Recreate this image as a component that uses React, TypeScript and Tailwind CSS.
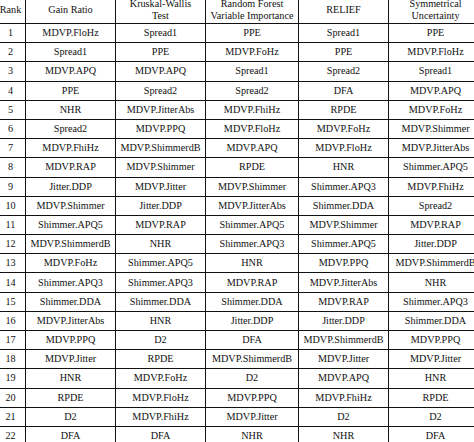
import { Fragment, ReactNode } from 'react';

const headers: string[][] = [
  ['Rank'],
  ['Gain Ratio'],
  ['Kruskal-Wallis', 'Test'],
  ['Random Forest', 'Variable Importance'],
  ['RELIEF'],
  ['Symmetrical', 'Uncertainty'],
];

const rows: string[][] = [
  ['MDVP.FloHz', 'Spread1', 'PPE', 'Spread1', 'PPE'],
  ['Spread1', 'PPE', 'MDVP.FoHz', 'PPE', 'MDVP.FloHz'],
  ['MDVP.APQ', 'MDVP.APQ', 'Spread1', 'Spread2', 'Spread1'],
  ['PPE', 'Spread2', 'Spread2', 'DFA', 'MDVP.APQ'],
  ['NHR', 'MDVP.JitterAbs', 'MDVP.FhiHz', 'RPDE', 'MDVP.FoHz'],
  ['Spread2', 'MDVP.PPQ', 'MDVP.FloHz', 'MDVP.FoHz', 'MDVP.Shimmer'],
  ['MDVP.FhiHz', 'MDVP.ShimmerdB', 'MDVP.APQ', 'MDVP.FloHz', 'MDVP.JitterAbs'],
  ['MDVP.RAP', 'MDVP.Shimmer', 'RPDE', 'HNR', 'Shimmer.APQ5'],
  ['Jitter.DDP', 'MDVP.Jitter', 'MDVP.Shimmer', 'Shimmer.APQ3', 'MDVP.FhiHz'],
  ['MDVP.Shimmer', 'Jitter.DDP', 'MDVP.JitterAbs', 'Shimmer.DDA', 'Spread2'],
  ['Shimmer.APQ5', 'MDVP.RAP', 'Shimmer.APQ5', 'MDVP.Shimmer', 'MDVP.RAP'],
  ['MDVP.ShimmerdB', 'NHR', 'Shimmer.APQ3', 'Shimmer.APQ5', 'Jitter.DDP'],
  ['MDVP.FoHz', 'Shimmer.APQ5', 'HNR', 'MDVP.PPQ', 'MDVP.ShimmerdB'],
  ['Shimmer.APQ3', 'Shimmer.APQ3', 'MDVP.RAP', 'MDVP.JitterAbs', 'NHR'],
  ['Shimmer.DDA', 'Shimmer.DDA', 'Shimmer.DDA', 'MDVP.RAP', 'Shimmer.APQ3'],
  ['MDVP.JitterAbs', 'HNR', 'Jitter.DDP', 'Jitter.DDP', 'Shimmer.DDA'],
  ['MDVP.PPQ', 'D2', 'DFA', 'MDVP.ShimmerdB', 'MDVP.PPQ'],
  ['MDVP.Jitter', 'RPDE', 'MDVP.ShimmerdB', 'MDVP.Jitter', 'MDVP.Jitter'],
  ['HNR', 'MDVP.FoHz', 'D2', 'MDVP.APQ', 'HNR'],
  ['RPDE', 'MDVP.FloHz', 'MDVP.PPQ', 'MDVP.FhiHz', 'RPDE'],
  ['D2', 'MDVP.FhiHz', 'MDVP.Jitter', 'D2', 'D2'],
  ['DFA', 'DFA', 'NHR', 'NHR', 'DFA'],
];

const Cell = ({ children, last }: { children: ReactNode; last: boolean }) => (
  <div
    className={`flex flex-col items-center justify-center text-center whitespace-nowrap border-b border-[#111] ${
      last ? '' : 'border-r'
    }`}
  >
    {children}
  </div>
);

export default function App() {
  return (
    <div className="w-[474px] h-[442px] overflow-hidden bg-white">
      <div
        className="grid grid-cols-[30px_90px_90px_93px_90px_93px] grid-rows-[28px_repeat(22,19.2px)] ml-[-4px] mt-[-4px] text-[10.2px] leading-[12px] text-[#111]"
        style={{ fontFamily: '"Liberation Serif", "Times New Roman", serif' }}
      >
        {headers.map((h, i) => (
          <Cell key={h.join()} last={i === headers.length - 1}>
            {h.map(line => (
              <span key={line}>{line}</span>
            ))}
          </Cell>
        ))}
        {rows.map((r, ri) => (
          <Fragment key={ri}>
            <Cell last={false}>{ri + 1}</Cell>
            {r.map((v, ci) => (
              <Cell key={ci} last={ci === r.length - 1}>
                {v}
              </Cell>
            ))}
          </Fragment>
        ))}
      </div>
    </div>
  );
}
